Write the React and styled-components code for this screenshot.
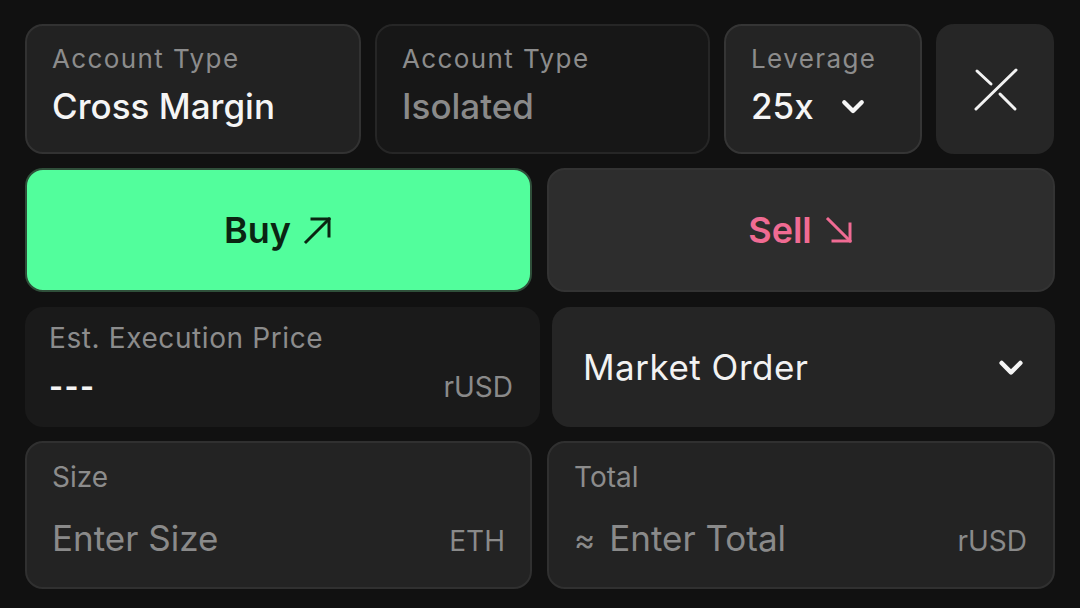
import React from "react";
import styled, { createGlobalStyle } from "styled-components";

const Global = createGlobalStyle`
  html, body { margin: 0; padding: 0; background: #111111; }
  body { font-family: Inter, "Open Sans", sans-serif; color: #f2f2f2; }
  * { box-sizing: border-box; }
`;

const Page = styled.div`
  width: 1080px;
  height: 608px;
  padding: 24px 25px 0 25px;
  display: flex;
  flex-direction: column;
  gap: 14px;
  background: #111111;
`;

const Row = styled.div`
  display: grid;
  grid-template-columns: ${(p) => p.$cols};
  column-gap: ${(p) => p.$gap || 14}px;
  height: ${(p) => p.$h}px;
  margin-top: ${(p) => p.$mt || 0}px;
`;

const Card = styled.div`
  border-radius: 18px;
  background: ${(p) => p.$bg || "#242424"};
  border: 2px solid ${(p) => p.$border || "transparent"};
  padding: ${(p) => p.$pad || "17px 25px"};
  display: flex;
  flex-direction: column;
  position: relative;
`;

const Label = styled.div`
  font-size: ${(p) => p.$size || 26}px;
  letter-spacing: ${(p) => p.$ls ?? 1.4}px;
  line-height: 32px;
  color: #8c8c8c;
`;

const Value = styled.div`
  font-size: 35px;
  line-height: 40px;
  margin-top: 11px;
  color: ${(p) => (p.$muted ? "#8a8a8a" : "#f5f5f5")};
  font-weight: 500;
  display: flex;
  align-items: center;
  gap: 24px;
`;

const IconButton = styled.div`
  border-radius: 18px;
  background: #262626;
  display: flex;
  align-items: center;
  justify-content: center;
`;

const ActionButton = styled.div`
  border-radius: 18px;
  background: ${(p) => (p.$buy ? "#52fe9c" : "#2d2d2d")};
  border: 2px solid ${(p) => (p.$buy ? "#2f4f3a" : "#333333")};
  color: ${(p) => (p.$buy ? "#0a2512" : "#f06b93")};
  display: flex;
  align-items: center;
  justify-content: center;
  gap: 12px;
  font-size: 36px;
  font-weight: 600;
`;

const InputRow = styled.div`
  display: flex;
  justify-content: space-between;
  align-items: baseline;
  margin-top: ${(p) => p.$mt || 0}px;
`;

const Placeholder = styled.div`
  font-size: 35px;
  color: #8a8a8a;
  display: flex;
  align-items: baseline;
  gap: 14px;
`;

const Unit = styled.div`
  font-size: 28px;
  color: #8a8a8a;
`;

const Dashes = styled.div`
  font-size: 30px;
  color: #f5f5f5;
  font-weight: 700;
  letter-spacing: 1.5px;
`;

const SelectCard = styled.div`
  border-radius: 18px;
  background: #252525;
  display: flex;
  align-items: center;
  justify-content: space-between;
  padding: 0 28px 0 31px;
  font-size: 35px;
  letter-spacing: 0.5px;
  color: #f2f2f2;
`;

const Approx = styled.span`
  font-size: 32px;
`;

const Chevron = ({ size = 30 }) => (
  <svg width={size} height={size} viewBox="0 0 24 24" fill="none" stroke="#f5f5f5" strokeWidth="3.4" strokeLinecap="round" strokeLinejoin="round">
    <path d="M5 9l7 7 7-7" />
  </svg>
);

const CloseIcon = () => (
  <svg width="46" height="46" viewBox="0 0 46 46" fill="none" stroke="#f2f2f2" strokeWidth="3" strokeLinecap="round">
    <path d="M4 43 L44 4" />
    <path d="M5 5 L19 18" />
    <path d="M28 28 L43 43" />
  </svg>
);

const ArrowUpRight = () => (
  <svg width="30" height="30" viewBox="0 0 30 30" fill="none" stroke="#0a2512" strokeWidth="3" strokeLinecap="square">
    <path d="M3 27 L26 4" />
    <path d="M9 4 H26 V21" />
  </svg>
);

const ArrowDownRight = () => (
  <svg width="30" height="30" viewBox="0 0 30 30" fill="none" stroke="#f06b93" strokeWidth="3" strokeLinecap="square">
    <path d="M4 4 L26 26" />
    <path d="M26 9 V26 H9" />
  </svg>
);

export default function App() {
  return (
    <>
      <Global />
      <Page>
        <Row $cols="336px 335px 198px 118px" $h={130}>
          <Card $border="#323232" $bg="#222222">
            <Label>Account Type</Label>
            <Value>Cross Margin</Value>
          </Card>
          <Card $border="#262626" $bg="#171717">
            <Label>Account Type</Label>
            <Value $muted>Isolated</Value>
          </Card>
          <Card $border="#353535" $bg="#242424">
            <Label>Leverage</Label>
            <Value>
              25x <Chevron />
            </Value>
          </Card>
          <IconButton>
            <CloseIcon />
          </IconButton>
        </Row>

        <Row $cols="507px 508px" $gap={15} $h={124}>
          <ActionButton $buy>
            Buy <ArrowUpRight />
          </ActionButton>
          <ActionButton>
            Sell <ArrowDownRight />
          </ActionButton>
        </Row>

        <Row $cols="515px 503px" $gap={12} $h={120} $mt={1}>
          <Card $bg="#1a1a1a" $pad="13px 25px 0 22px">
            <Label $size={28} $ls={0.6}>Est. Execution Price</Label>
            <InputRow $mt={14}>
              <Dashes>---</Dashes>
              <Unit>rUSD</Unit>
            </InputRow>
          </Card>
          <SelectCard>
            Market Order <Chevron size={32} />
          </SelectCard>
        </Row>

        <Row $cols="507px 508px" $gap={15} $h={148}>
          <Card $border="#303030" $bg="#232323" $pad="18px 25px 0 25px">
            <Label $size={28} $ls={0}>Size</Label>
            <InputRow $mt={24}>
              <Placeholder>Enter Size</Placeholder>
              <Unit>ETH</Unit>
            </InputRow>
          </Card>
          <Card $border="#303030" $bg="#232323" $pad="18px 26px 0 25px">
            <Label $size={28} $ls={0}>Total</Label>
            <InputRow $mt={24}>
              <Placeholder>
                <Approx>≈</Approx> Enter Total
              </Placeholder>
              <Unit>rUSD</Unit>
            </InputRow>
          </Card>
        </Row>
      </Page>
    </>
  );
}
